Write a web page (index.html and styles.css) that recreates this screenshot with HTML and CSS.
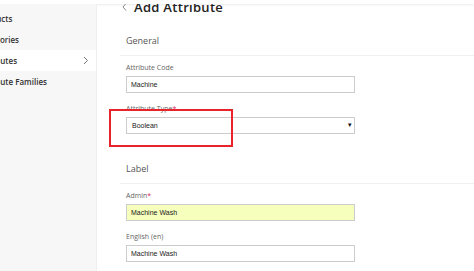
FILE: index.html
```
<!DOCTYPE html>
<html lang="en">

<head>
    <meta charset="UTF-8">
    <meta name="viewport" content="width=device-width, initial-scale=1.0">
    <title>Add Attribute</title>
    <link rel="stylesheet" href="styles.css">
</head>

<body>
    <div class="topbar"></div>
    <div class="layout">
        <nav class="sidebar">
            <a class="nav-item">Products</a>
            <a class="nav-item">Categories</a>
            <a class="nav-item active">Attributes
                <svg class="chev" width="6" height="9" viewBox="0 0 6 9"><path d="M1 1l3.5 3.5L1 8" fill="none" stroke="#777" stroke-width="1"/></svg>
            </a>
            <a class="nav-item">Attribute Families</a>
        </nav>
        <main class="main">
            <h1 class="page-title">
                <svg class="back" width="5" height="8" viewBox="0 0 5 8"><path d="M4 0.5L1 4l3 3.5" fill="none" stroke="#888" stroke-width="1"/></svg>
                Add Attribute
            </h1>
            <section class="card">
                <div class="card-head">General</div>
                <div class="card-body">
                    <label class="field-label" for="code">Attribute Code</label>
                    <input class="control" id="code" type="text" value="Machine">
                    <div class="field highlight">
                        <label class="field-label" for="type">Attribute Type<span class="req">*</span></label>
                        <div class="select-wrap">
                            <select class="control" id="type">
                                <option>Boolean</option>
                            </select>
                            <span class="arrow">&#9662;</span>
                        </div>
                        <div class="red-box"></div>
                    </div>
                </div>
            </section>
            <section class="card">
                <div class="card-head">Label</div>
                <div class="card-body">
                    <label class="field-label" for="admin">Admin<span class="req">*</span></label>
                    <input class="control filled" id="admin" type="text" value="Machine Wash">
                    <label class="field-label" for="en">English (en)</label>
                    <input class="control" id="en" type="text" value="Machine Wash">
                </div>
            </section>
        </main>
    </div>
</body>

</html>
```
FILE: styles.css
```
body {
    margin: 0;
    padding: 0;
    font-family: 'Open Sans', sans-serif;
    color: #333;
    background-color: #fff;
    overflow: hidden;
}
.topbar {
    height: 4px;
    background-color: #fff;
    box-shadow: 0 1px 2px rgba(0, 0, 0, 0.08);
}
.layout {
    display: flex;
    height: 267px;
    overflow: hidden;
}
.sidebar {
    width: 96px;
    flex-shrink: 0;
    background-color: #f7f7f7;
    border-right: 1px solid #efefef;
    padding-top: 4px;
    overflow: hidden;
}
.nav-item {
    display: flex;
    align-items: center;
    justify-content: space-between;
    height: 21px;
    margin-left: -22px;
    padding-right: 7px;
    font-size: 8px;
    font-weight: 600;
    color: #333;
    white-space: nowrap;
}
.nav-item.active {
    background-color: #fff;
}
.main {
    flex: 1;
    padding-left: 23px;
    overflow: hidden;
}
.page-title {
    margin: -4px 0 0 0;
    height: 27px;
    display: flex;
    align-items: flex-start;
    gap: 7px;
    font-size: 13px;
    line-height: 14px;
    font-weight: 600;
    color: #222;
    letter-spacing: 0.3px;
}
.back {
    margin-top: 3px;
    margin-left: 2px;
}
.card-head {
    height: 28px;
    line-height: 28px;
    padding-left: 6px;
    border-bottom: 1px solid #f0f0f0;
    font-size: 9px;
    color: #555;
}
.card-body {
    padding: 7px 6px 21px;
}
.field-label {
    display: block;
    height: 10px;
    line-height: 10px;
    margin-bottom: 3px;
    font-size: 7px;
    color: #666;
}
.req {
    color: #e0245e;
}
.control {
    display: block;
    box-sizing: border-box;
    width: 229px;
    height: 17px;
    margin: 0 0 11px 0;
    padding: 0 4px;
    border: 1px solid #ccc;
    border-radius: 0;
    background-color: #fff;
    font-family: 'Liberation Sans', Arial, sans-serif;
    font-size: 7px;
    color: #222;
    outline: none;
}
select.control {
    appearance: none;
    padding-left: 5px;
    margin-bottom: 0;
}
.control.filled {
    background-color: #f6ffbb;
}
.field {
    position: relative;
}
.select-wrap {
    position: relative;
    width: 229px;
}
.arrow {
    position: absolute;
    right: 3px;
    top: 4px;
    font-size: 7px;
    line-height: 8px;
    color: #111;
}
.red-box {
    position: absolute;
    left: -17px;
    top: 5px;
    width: 120px;
    height: 34px;
    border: 2px solid #e8232a;
}
```
